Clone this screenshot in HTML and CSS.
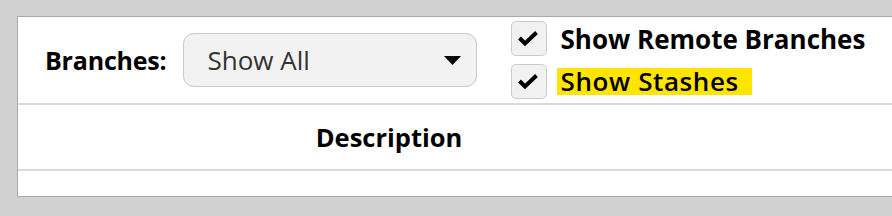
FILE: index.html
```html
<!DOCTYPE html>
<html lang="en">
<head>
  <meta charset="UTF-8" />
  <title>Branches</title>
  <link rel="stylesheet" href="styles.css">
</head>
<body>

<div class="panel">
  <div class="toolbar">
    <span class="label">Branches:</span>
    <div class="select">
      <span>Show All</span>
      <svg class="arrow" width="17" height="9" viewBox="0 0 17 9"><path d="M0 0 H17 L8.5 9 Z" fill="#000"/></svg>
    </div>
    <div class="options">
      <label class="option">
        <span class="box">
          <svg class="check" width="22" height="17" viewBox="0 0 22 17"><path d="M2.5 8 L8 13.5 L19.5 2.5" fill="none" stroke="#000" stroke-width="4"/></svg>
        </span>
        <span class="bold">Show Remote Branches</span>
      </label>
      <label class="option">
        <span class="box">
          <svg class="check" width="22" height="17" viewBox="0 0 22 17"><path d="M2.5 8 L8 13.5 L19.5 2.5" fill="none" stroke="#000" stroke-width="4"/></svg>
        </span>
        <span class="mark">Show Stashes</span>
      </label>
    </div>
  </div>

  <div class="header">
    <div class="col">Description</div>
  </div>

  <div class="row"></div>
</div>

</body>
</html>
```

FILE: styles.css
```css
* {
  box-sizing: border-box;
}

body {
  margin: 0;
  background: #d2d2d2;
  font-family: 'Open Sans', 'Noto Sans', sans-serif;
  color: #000;
  height: 216px;
  overflow: hidden;
}

.panel {
  margin: 16px 0 0 17px;
  height: 181px;
  background: #fff;
  border: 1px solid #a9a9a9;
  border-right: none;
}

.toolbar {
  display: flex;
  align-items: center;
  height: 88px;
  padding-left: 27px;
  border-bottom: 2px solid #dadada;
}

.label {
  font-size: 25px;
  font-weight: 700;
  letter-spacing: -0.2px;
  margin-right: 16px;
}

.select {
  width: 294px;
  height: 54px;
  display: flex;
  align-items: center;
  justify-content: space-between;
  padding: 0 15px 0 24px;
  background: #f2f2f2;
  border: 1px solid #c8c8c8;
  border-radius: 11px;
  font-size: 26px;
  color: #333;
  margin-right: 34px;
  flex-shrink: 0;
}

.options {
  display: flex;
  flex-direction: column;
  gap: 8px;
}

.option {
  display: flex;
  align-items: center;
  height: 35px;
  font-size: 26px;
}

.box {
  width: 36px;
  height: 35px;
  flex-shrink: 0;
  display: flex;
  align-items: center;
  justify-content: center;
  background: #f1f1f1;
  border: 1px solid #cacaca;
  border-radius: 5px;
  margin-right: 10px;
}

.check {
  flex-shrink: 0;
  margin-right: 2px;
}

.bold {
  font-weight: 700;
  padding-left: 4px;
}

.mark {
  font-weight: 600;
  letter-spacing: 0.6px;
  background: #ffe500;
  padding: 0 13px 0 4px;
  line-height: 27px;
}

.header {
  height: 66px;
  display: flex;
  align-items: center;
  border-bottom: 2px solid #dadada;
}

.header .col {
  width: 742px;
  text-align: center;
  font-size: 25.5px;
  font-weight: 700;
}
```
